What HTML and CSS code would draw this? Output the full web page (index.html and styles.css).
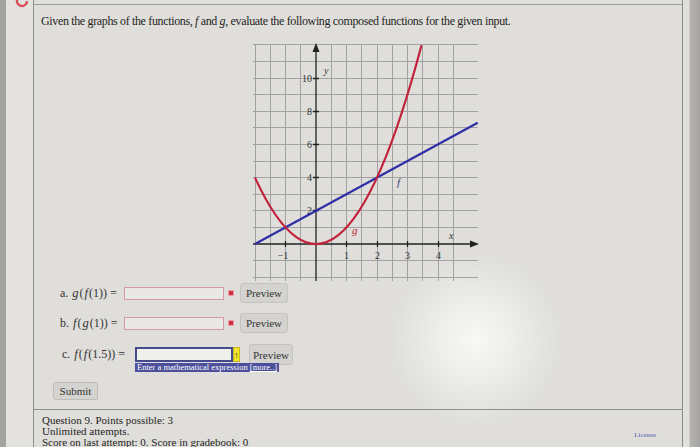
FILE: index.html
```html
<!DOCTYPE html>
<html>
<head>
<meta charset="utf-8">
<link rel="stylesheet" href="styles.css">
</head>
<body>
<div class="screen">
  <div class="edge-dark"></div>
  <div class="gutter">
    <svg class="reload" width="16" height="16" viewBox="0 0 16 16"><path d="M13 8a5 5 0 1 1-2-4" fill="none" stroke="#d9505c" stroke-width="2.4"/></svg>
  </div>
  <div class="main">
    <div class="prev"></div>
    <div class="panel">
      <p class="prompt">Given the graphs of the functions, <i>f</i> and <i>g</i>, evaluate the following composed functions for the given input.</p>
      <div class="graph">
        <svg width="226" height="240" viewBox="0 0 226 240">
          <path class="grid" d="M2.5 1V238M17.5 1V238M32.5 1V238M47.5 1V238M78.5 1V238M93.5 1V238M108.5 1V238M124.5 1V238M139.5 1V238M154.5 1V238M169.5 1V238M185.5 1V238M200.5 1V238M0 1.5H225M0 18.5H225M0 35.5H225M0 51.5H225M0 68.5H225M0 84.5H225M0 101.5H225M0 118.5H225M0 134.5H225M0 151.5H225M0 167.5H225M0 184.5H225M0 217.5H225M0 234.5H225"/>
          <path class="axis" d="M63 238V8M0 201H218M60 35.5H66M60 68.5H66M60 101.5H66M60 134.5H66M60 167.5H66M32.5 198V204M93.5 198V204M124.5 198V204M154.5 198V204M185.5 198V204"/>
          <polygon points="63,0 59.5,9 66.5,9" fill="#222"/>
          <polygon points="226,201 217,197.5 217,204.5" fill="#222"/>
          <g class="lab">
            <text x="59" y="39" text-anchor="end">10</text>
            <text x="59" y="72" text-anchor="end">8</text>
            <text x="59" y="105" text-anchor="end">6</text>
            <text x="59" y="138" text-anchor="end">4</text>
            <text x="59" y="171" text-anchor="end">2</text>
            <text x="30" y="216" text-anchor="middle">−1</text>
            <text x="93.5" y="216" text-anchor="middle">1</text>
            <text x="124.5" y="216" text-anchor="middle">2</text>
            <text x="154.5" y="216" text-anchor="middle">3</text>
            <text x="185.5" y="216" text-anchor="middle">4</text>
            <text class="it" x="71" y="31">y</text>
            <text class="it" x="196" y="196">x</text>
          </g>
          <path d="M2 201L224.7 79.8" stroke="#2e2fa6" stroke-width="2.2" fill="none"/>
          <path d="M2 134.6Q85.3 315.9 168.5 2.3" stroke="#c3223c" stroke-width="2.2" fill="none"/>
          <text class="it fl" x="144" y="143">f</text>
          <text class="it gl" x="99" y="191">g</text>
        </svg>
      </div>
      <div class="answers">
        <div class="row">
          <span class="lbl">a. <i>g</i>(<i>f</i>(1)) =</span>
          <span class="field bad"></span>
          <span class="mark"></span>
          <button class="btn">Preview</button>
        </div>
        <div class="row">
          <span class="lbl">b. <i>f</i>(<i>g</i>(1)) =</span>
          <span class="field bad"></span>
          <span class="mark"></span>
          <button class="btn">Preview</button>
        </div>
        <div class="row row-c">
          <span class="lbl lbl-c">c. <i>f</i>(<i>f</i>(1.5)) =</span>
          <span class="field-wrap">
            <span class="field focus"></span>
            <span class="tip">Enter a mathematical expression <u>[more..]</u></span>
          </span>
          <span class="tab">↑</span>
          <button class="btn btn-c">Preview</button>
        </div>
      </div>
      <button class="submit">Submit</button>
    </div>
    <div class="info">
      <div class="lines">
        <div>Question 9. Points possible: 3</div>
        <div>Unlimited attempts.</div>
        <div>Score on last attempt: 0. Score in gradebook: 0</div>
      </div>
      <a class="license">License</a>
    </div>
  </div>
  <div class="edge-right"></div>
</div>
</body>
</html>
```
FILE: styles.css
```css
* { box-sizing: border-box; }
html, body { margin: 0; height: 100%; }
body {
  font-family: "Liberation Serif", "Times New Roman", serif;
  color: #2a2a2a;
  background: #dcdbd7;
  overflow: hidden;
}
.screen { display: flex; width: 700px; height: 447px; overflow: hidden; }
.edge-dark { width: 6px; flex: none; background: #a3a3a1; }
.gutter { width: 28px; flex: none; background: #e3e2de; border-right: 1px solid #8d8d90; }
.reload { display: block; margin: -7px 0 0 8px; }
.main {
  width: 649px; flex: none;
  background: radial-gradient(circle at 441px 340px, #f8f8f6 0, #eeeeeb 35px, rgba(223,222,218,0) 85px), #dfdeda;
  border-right: 1px solid #8d8d90;
  display: flex; flex-direction: column;
}
.prev { height: 5px; flex: none; border-bottom: 1px solid #9a9a9c; }
.panel { padding: 8px 0 9px 7px; border-bottom: 1px solid #8f8f91; flex: none; }
.prompt { margin: 0; font-size: 12px; line-height: 16px; color: #1f1f1f; white-space: nowrap; letter-spacing: -0.35px; }
.graph { margin: 14px 0 0 212px; height: 240px; }
.graph svg { display: block; }
.grid { stroke: #a2a2a2; stroke-width: 1; fill: none; }
.axis { stroke: #222; stroke-width: 1.3; fill: none; }
.lab text { font-family: "Liberation Serif", serif; font-size: 10px; fill: #333; }
.it { font-style: italic; font-family: "Liberation Serif", serif; font-size: 11px; fill: #333; }
.fl { fill: #3b3d7a; }
.gl { fill: #c3223c; }
.answers { display: flex; flex-direction: column; gap: 10px; padding-left: 19px; }
.row { display: flex; align-items: center; height: 20px; }
.row-c { height: 21px; margin-top: 1px; }
.lbl { font-size: 12px; width: 64px; white-space: nowrap; color: #333; }
.lbl i { font-size: 12.5px; padding: 0 1px; }
.lbl-c { width: 75px; padding-left: 2px; }
.field { display: block; width: 100px; height: 13px; border: 1px solid #d89aa2; background: #e9e8e4; }
.mark { width: 6px; height: 6px; margin-left: 4px; background: #d3303d; border: 1px solid #eaa0a8; }
.btn {
  margin-left: 6px; height: 20px; padding: 0 5px;
  font: 11px "Liberation Serif", serif; color: #333;
  background: #d4d3cf; border: 1px solid #c4c3bf; border-radius: 3px;
}
.field-wrap { position: relative; display: block; }
.field.focus { width: 98px; height: 15px; border: 2px solid #454a8f; background: #efefeb; }
.tip {
  position: absolute; left: 0; top: 16px;
  background: #4c509c; color: #fff; font-size: 8.5px; line-height: 9px;
  padding: 0 2px; white-space: nowrap;
}
.tab {
  width: 7px; height: 15px; background: #f1e22c; color: #333;
  font-size: 9px; line-height: 15px; text-align: center; border: 1px solid #c8b820;
}
.btn-c { margin-left: 9px; height: 21px; width: 44px; padding: 0; }
.submit {
  display: block; margin: 17px 0 0 12px; width: 45px; height: 18px; padding: 0;
  font: 11px "Liberation Serif", serif; color: #333;
  background: #d4d3cf; border: 1px solid #bebdb9; border-radius: 3px;
}
.info { display: flex; justify-content: space-between; padding: 5px 26px 0 8px; }
.lines { font-size: 11px; line-height: 11px; color: #252525; }
.license { font-size: 7px; color: #5660b5; padding-top: 16px; }
.edge-right { flex: 1; background: linear-gradient(90deg, #e1e0dc 0, #e1e0dc 6px, #b5b4b2 7px, #a4a3a1 100%); }
```
